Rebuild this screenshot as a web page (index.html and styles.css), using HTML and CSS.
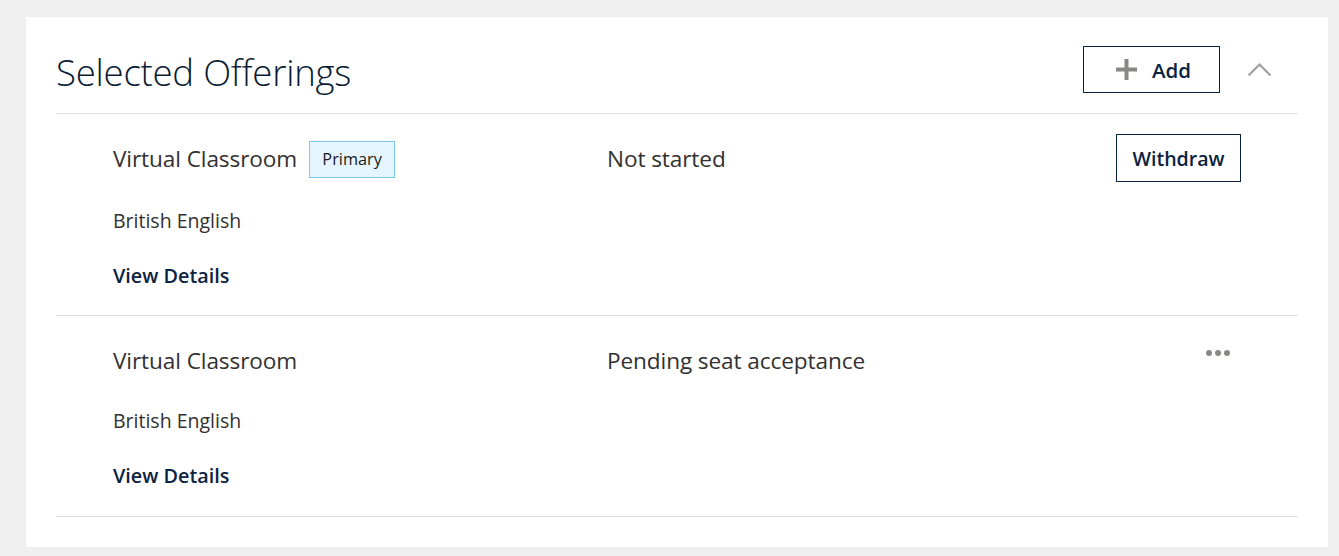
FILE: index.html
```html
<!DOCTYPE html>
<html lang="en">
<head>
<meta charset="utf-8">
<title>Selected Offerings</title>
<link rel="stylesheet" href="styles.css">
</head>
<body>
<section class="card">
  <header class="card-header">
    <h1 class="title">Selected Offerings</h1>
    <button class="btn btn-add" type="button">
      <svg class="plus" width="21" height="21" viewBox="0 0 21 21" aria-hidden="true">
        <rect x="8.5" y="0" width="4" height="21" fill="#8a8886"/>
        <rect x="0" y="8.5" width="21" height="4" fill="#8a8886"/>
      </svg>
      <span>Add</span>
    </button>
    <button class="collapse" type="button" aria-label="Collapse">
      <svg width="25" height="15" viewBox="0 0 25 15" aria-hidden="true">
        <polyline points="1.5,13.5 12.5,2.5 23.5,13.5" fill="none" stroke="#a19f9d" stroke-width="2.2"/>
      </svg>
    </button>
  </header>

  <div class="row">
    <div class="col-name">
      <div class="line1">
        <span class="name">Virtual Classroom</span>
        <span class="badge">Primary</span>
      </div>
      <div class="lang">British English</div>
      <a class="details" href="#">View Details</a>
    </div>
    <div class="col-status">
      <div class="line1"><span class="status">Not started</span></div>
    </div>
    <div class="col-actions">
      <button class="btn btn-withdraw" type="button">Withdraw</button>
    </div>
  </div>

  <div class="row row-last">
    <div class="col-name">
      <div class="line1">
        <span class="name">Virtual Classroom</span>
      </div>
      <div class="lang">British English</div>
      <a class="details" href="#">View Details</a>
    </div>
    <div class="col-status">
      <div class="line1"><span class="status">Pending seat acceptance</span></div>
    </div>
    <div class="col-actions">
      <button class="more" type="button" aria-label="More actions">
        <span class="dot"></span><span class="dot"></span><span class="dot"></span>
      </button>
    </div>
  </div>
</section>
</body>
</html>
```

FILE: styles.css
```css
* { box-sizing: border-box; }

html, body {
  margin: 0;
  background: #f0f0f0;
}

body {
  padding: 17px 11px 9px 26px;
  font-family: "Open Sans", "Noto Sans", sans-serif;
  color: #323130;
}

.card {
  background: #ffffff;
  height: 530px;
  padding: 0 30px;
}

.card-header {
  display: flex;
  align-items: center;
  padding: 29px 0 20px;
  border-bottom: 1px solid #e1dfdd;
}

.title {
  flex: 1;
  margin: 0;
  height: 47px;
  padding-top: 6px;
  font-weight: 300;
  font-size: 36.6px;
  line-height: 41px;
  color: #0a1c33;
  letter-spacing: -0.25px;
  white-space: nowrap;
}

.btn {
  font-family: inherit;
  background: #ffffff;
  border: 1px solid #0b2340;
  color: #0b2340;
  cursor: pointer;
  font-weight: 600;
}

.btn-add {
  display: flex;
  align-items: center;
  width: 137px;
  height: 47px;
  padding: 0 0 0 32px;
  font-size: 20.5px;
  gap: 15px;
}

.btn-add span { line-height: 24px; }

.collapse {
  margin: 0 26px 0 27px;
  padding: 0;
  border: 0;
  background: transparent;
  display: flex;
  align-items: center;
  height: 30px;
}

.row {
  display: grid;
  grid-template-columns: 494px 1fr auto;
  padding: 20px 57px 27px 57px;
  border-bottom: 1px solid #e1dfdd;
}

.row-last {
  padding-bottom: 28px;
}

.line1 {
  display: flex;
  align-items: center;
  height: 48px;
  padding-top: 2px;
}

.name, .status {
  font-size: 22.6px;
  line-height: 30px;
  color: #323130;
  letter-spacing: -0.1px;
}

.badge {
  margin-left: 12px;
  height: 37px;
  width: 86px;
  display: flex;
  align-items: center;
  justify-content: center;
  background: #e5f5fd;
  border: 1px solid #7cc7ee;
  font-size: 16.3px;
  color: #1b1a19;
}

.lang {
  margin-top: 27px;
  font-size: 19.5px;
  line-height: 24px;
  color: #323130;
}

.row-last .lang {
  margin-top: 25px;
}

.details {
  display: block;
  margin-top: 31px;
  font-size: 19.8px;
  line-height: 24px;
  font-weight: 600;
  color: #0b2340;
  text-decoration: none;
}

.col-actions {
  display: flex;
  justify-content: flex-end;
  align-items: flex-start;
}

.btn-withdraw {
  width: 125px;
  height: 48px;
  padding: 0;
  font-size: 19.6px;
}

.more {
  display: flex;
  gap: 3px;
  align-items: center;
  margin: 7px 11px 0 0;
  height: 20px;
  padding: 0;
  border: 0;
  background: transparent;
}

.dot {
  width: 6px;
  height: 6px;
  border-radius: 50%;
  background: #8a8886;
}
```
